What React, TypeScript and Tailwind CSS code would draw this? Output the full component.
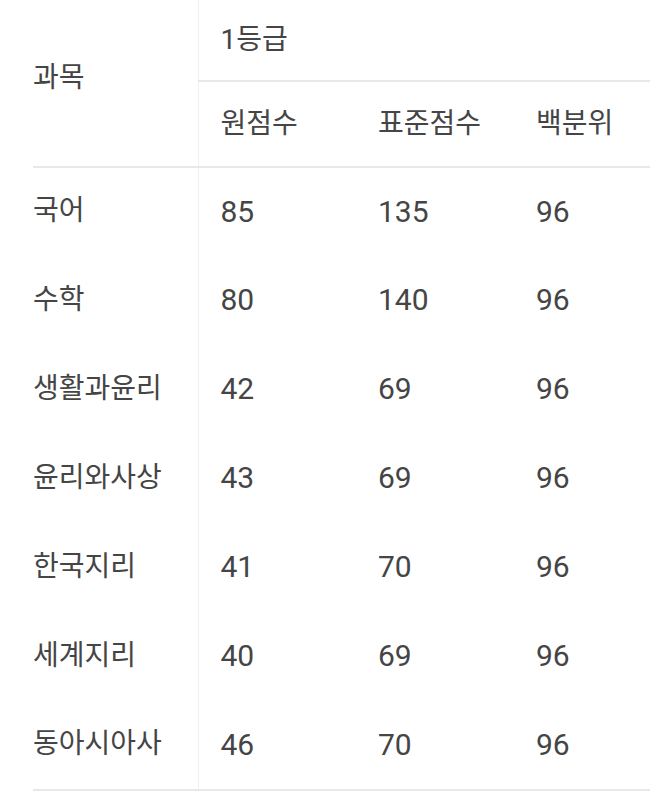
const rows: [string, string, string, string][] = [
  ["국어", "85", "135", "96"],
  ["수학", "80", "140", "96"],
  ["생활과윤리", "42", "69", "96"],
  ["윤리와사상", "43", "69", "96"],
  ["한국지리", "41", "70", "96"],
  ["세계지리", "40", "69", "96"],
  ["동아시아사", "46", "70", "96"],
];

export default function App() {
  return (
    <div className="w-[650px] h-[812px] bg-white overflow-hidden font-['Roboto','Noto_Sans_CJK_KR',sans-serif] text-[28px] text-[#454545]">
      <table className="ml-[33px] w-[617px] border-collapse table-fixed">
        <colgroup>
          <col className="w-[165px]" />
          <col className="w-[158px]" />
          <col className="w-[158px]" />
          <col />
        </colgroup>
        <thead>
          <tr className="h-[81px]">
            <th
              rowSpan={2}
              className="text-left font-normal align-middle pb-[10px] border-r border-[#f0f0f0] border-b-2 border-b-[#e8e8e8]"
            >
              과목
            </th>
            <th
              colSpan={3}
              className="text-left font-normal pl-[22px] align-middle border-b-2 border-[#e8e8e8]"
            >
              1등급
            </th>
          </tr>
          <tr className="h-[86px] border-b-2 border-[#e8e8e8]">
            <th className="text-left font-normal pl-[22px]">원점수</th>
            <th className="text-left font-normal pl-[22px]">표준점수</th>
            <th className="text-left font-normal pl-[22px]">백분위</th>
          </tr>
        </thead>
        <tbody>
          {rows.map(([name, raw, std, pct], i) => (
            <tr
              key={name}
              className={i === rows.length - 1 ? "h-[89px] border-b-2 border-[#e8e8e8]" : "h-[89px]"}
            >
              <td className="border-r border-[#f0f0f0] pb-[2px]">{name}</td>
              <td className="pl-[22px] text-[30px] pb-[2px]">{raw}</td>
              <td className="pl-[22px] text-[30px] pb-[2px]">{std}</td>
              <td className="pl-[22px] text-[30px] pb-[2px]">{pct}</td>
            </tr>
          ))}
        </tbody>
      </table>
    </div>
  );
}
